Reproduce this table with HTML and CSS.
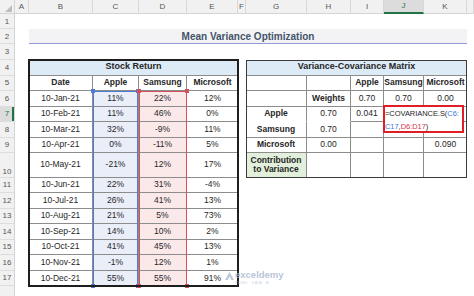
FILE: index.html
```html
<!DOCTYPE html>
<html>
<head>
<meta charset="utf-8">
<link rel="stylesheet" href="styles.css">
</head>
<body>
<div class="sheet">
  <div class="colheads">
    <div class="corner"><span class="tri"></span></div>
    <div class="ch">A</div><div class="ch">B</div><div class="ch">C</div><div class="ch">D</div>
    <div class="ch">E</div><div class="ch">F</div><div class="ch">G</div><div class="ch">H</div>
    <div class="ch">I</div><div class="ch sel">J</div><div class="ch">K</div><div class="ch"></div>
  </div>
  <div class="body">
    <div class="rowheads">
      <div class="rh">1</div><div class="rh">2</div><div class="rh">3</div><div class="rh">4</div>
      <div class="rh">5</div><div class="rh">6</div><div class="rh sel">7</div><div class="rh">8</div>
      <div class="rh">9</div><div class="rh tall">10</div><div class="rh">11</div><div class="rh">12</div>
      <div class="rh">13</div><div class="rh">14</div><div class="rh">15</div><div class="rh">16</div>
      <div class="rh">17</div><div class="rh"></div>
    </div>
    <div class="canvas">
      <div class="title">Mean Variance Optimization</div>

      <div class="stock">
        <div class="layer stock-grid">
          <div class="cell head span4">Stock Return</div>
          <div class="cell bold">Date</div><div class="cell bold">Apple</div><div class="cell bold">Samsung</div><div class="cell bold last">Microsoft</div>
          <div class="cell">10-Jan-21</div><div class="cell blue">11%</div><div class="cell pink">22%</div><div class="cell last">12%</div>
          <div class="cell">10-Feb-21</div><div class="cell blue">11%</div><div class="cell pink">46%</div><div class="cell last">0%</div>
          <div class="cell">10-Mar-21</div><div class="cell blue">32%</div><div class="cell pink">-9%</div><div class="cell last">11%</div>
          <div class="cell">10-Apr-21</div><div class="cell blue">0%</div><div class="cell pink">-11%</div><div class="cell last">5%</div>
          <div class="cell">10-May-21</div><div class="cell blue">-21%</div><div class="cell pink">12%</div><div class="cell last">17%</div>
          <div class="cell">10-Jun-21</div><div class="cell blue">22%</div><div class="cell pink">31%</div><div class="cell last">-4%</div>
          <div class="cell">10-Jul-21</div><div class="cell blue">26%</div><div class="cell pink">41%</div><div class="cell last">13%</div>
          <div class="cell">10-Aug-21</div><div class="cell blue">21%</div><div class="cell pink">5%</div><div class="cell last">73%</div>
          <div class="cell">10-Sep-21</div><div class="cell blue">14%</div><div class="cell pink">10%</div><div class="cell last">2%</div>
          <div class="cell">10-Oct-21</div><div class="cell blue">41%</div><div class="cell pink">45%</div><div class="cell last">13%</div>
          <div class="cell">10-Nov-21</div><div class="cell blue">-1%</div><div class="cell pink">12%</div><div class="cell last">1%</div>
          <div class="cell bottom">10-Dec-21</div><div class="cell blue bottom">55%</div><div class="cell pink bottom">55%</div><div class="cell last bottom">91%</div>
        </div>
        <div class="layer stock-grid overlay">
          <div class="range range-c"><i class="h tl"></i><i class="h tr"></i><i class="h bl"></i><i class="h br"></i></div>
          <div class="range range-d"><i class="h tl"></i><i class="h tr"></i><i class="h bl"></i><i class="h br"></i></div>
        </div>
        <div class="layer frame frame-thick"></div>
      </div>

      <div class="matrix">
        <div class="layer matrix-grid">
          <div class="cell head span5">Variance-Covariance Matrix</div>
          <div class="cell"></div><div class="cell"></div><div class="cell bold">Apple</div><div class="cell bold">Samsung</div><div class="cell bold last">Microsoft</div>
          <div class="cell"></div><div class="cell bold">Weights</div><div class="cell">0.70</div><div class="cell">0.70</div><div class="cell last">0.00</div>
          <div class="cell bold nob">Apple</div><div class="cell nob">0.70</div><div class="cell">0.041</div><div class="cell"></div><div class="cell last"></div>
          <div class="cell bold">Samsung</div><div class="cell">0.70</div><div class="cell"></div><div class="cell"></div><div class="cell last"></div>
          <div class="cell bold">Microsoft</div><div class="cell">0.00</div><div class="cell"></div><div class="cell"></div><div class="cell last">0.090</div>
          <div class="cell bold green bottom">Contribution<br>to Variance</div><div class="cell bottom"></div><div class="cell bottom"></div><div class="cell bottom"></div><div class="cell last bottom"></div>
        </div>
        <div class="layer matrix-grid overlay">
          <div class="editor">=COVARIANCE.S(<span class="ref-c">C6:<br>C17</span>,<span class="ref-d">D6:D17</span>)</div>
        </div>
        <div class="layer frame frame-thin"></div>
      </div>

      <div class="watermark">
        <svg class="wm-icon" width="9" height="10" viewBox="0 0 10 11"><path d="M0 10 L5 1 L10 10 Z M3 10 L5 6 L7 10 Z" fill="#aebbd0" fill-rule="evenodd"/></svg>
        <div class="wm-text">
          <span class="wm-name">exceldemy</span>
          <span class="wm-sub">EXCEL · DATA · BI</span>
        </div>
      </div>
    </div>
  </div>
</div>
</body>
</html>
```
FILE: styles.css
```css
html, body {
  margin: 0;
  padding: 0;
  background: #ffffff;
}
body {
  font-family: "Liberation Sans", Arial, sans-serif;
  font-size: 8.5px;
  color: #262626;
  width: 474px;
  height: 296px;
  overflow: hidden;
}
.sheet {
  display: flex;
  flex-direction: column;
  width: 474px;
  height: 296px;
  overflow: hidden;
}
.colheads {
  display: grid;
  grid-template-columns: 15px 14px 64px 46px 48px 51px 8px 61px 44px 33px 40px 43px 7px;
  height: 14px;
  flex: none;
  background: #f1f1f1;
  border-bottom: 1px solid #d4d4d4;
  box-sizing: border-box;
}
.corner {
  border-right: 1px solid #d4d4d4;
  position: relative;
}
.tri {
  position: absolute;
  right: 2px;
  bottom: 2px;
  width: 0;
  height: 0;
  border-left: 7px solid transparent;
  border-bottom: 7px solid #bdbdbd;
}
.ch {
  border-right: 1px solid #d8d8d8;
  text-align: center;
  font-size: 8px;
  line-height: 13px;
  color: #555;
}
.ch.sel {
  background: #dcdcdc;
  border-bottom: 2px solid #217346;
  color: #217346;
  line-height: 12px;
}
.body {
  display: flex;
  flex: 1;
  min-height: 0;
  overflow: hidden;
}
.rowheads {
  display: flex;
  flex-direction: column;
  width: 15px;
  flex: none;
  background: #f1f1f1;
  border-right: 1px solid #d4d4d4;
  box-sizing: border-box;
}
.rh {
  height: 15.5px;
  flex: none;
  box-sizing: border-box;
  border-bottom: 1px solid #dddddd;
  font-size: 8px;
  color: #555;
  text-align: center;
  display: flex;
  align-items: center;
  justify-content: center;
}
.rh:nth-child(1), .rh:nth-child(2) { height: 15px; }
.rh:nth-child(3) { height: 16px; }
.rh.tall { height: 24.5px; align-items: flex-end; padding-bottom: 1px; }
.rh.sel {
  background: #dcdcdc;
  color: #217346;
  box-shadow: inset -2px 0 0 #217346;
}
.canvas {
  display: grid;
  grid-template-columns: 14px 64px 46px 48px 51px 8px 61px 44px 33px 40px 43px 7px;
  grid-template-rows: 15px 15px 16px repeat(6, 15.5px) 24.5px repeat(7, 15.5px) 1fr;
}
.title {
  grid-column: 2 / 12;
  grid-row: 2;
  background: #f3f3f5;
  border-bottom: 1px solid #8f9bd8;
  color: #44546a;
  font-weight: bold;
  font-size: 10px;
  text-align: center;
  line-height: 15px;
  box-sizing: border-box;
}
.stock, .matrix {
  display: grid;
}
.stock {
  grid-column: 2 / 6;
  grid-row: 4 / 18;
}
.matrix {
  grid-column: 7 / 12;
  grid-row: 4 / 11;
}
.layer {
  grid-area: 1 / 1;
}
.stock-grid {
  display: grid;
  grid-template-columns: 64px 46px 48px 51px;
  grid-template-rows: repeat(6, 15.5px) 24.5px repeat(7, 15.5px);
}
.matrix-grid {
  display: grid;
  grid-template-columns: 61px 44px 33px 40px 43px;
  grid-template-rows: repeat(6, 15.5px) 24.5px;
}
.overlay {
  pointer-events: none;
  z-index: 1;
}
.frame {
  pointer-events: none;
  z-index: 2;
  box-sizing: border-box;
}
.frame-thick {
  border: 2px solid #1e1e1e;
  margin: -1px;
}
.frame-thin {
  border: 1px solid #3a3a3a;
}
.cell {
  border-right: 1px solid #8c8c8c;
  border-bottom: 1px solid #8c8c8c;
  box-sizing: border-box;
  display: flex;
  align-items: center;
  justify-content: center;
  text-align: center;
  white-space: nowrap;
  line-height: 1.1;
}
.cell.last { border-right: none; }
.cell.bottom { border-bottom: none; }
.cell.nob { border-bottom-color: transparent; }
.cell.bold { font-weight: bold; }
.cell.head {
  background: #ddebf7;
  font-weight: bold;
  font-size: 9px;
  border-right: none;
}
.span4 { grid-column: 1 / 5; }
.span5 { grid-column: 1 / 6; }
.blue { background: #e9eef9; }
.pink { background: #fbe9ea; }
.green { background: #e2efda; white-space: normal; }
.range {
  grid-row: 3 / 15;
  position: relative;
  box-sizing: border-box;
}
.range-c {
  grid-column: 2;
  border: 1.5px solid #4f7bd5;
  margin: 0 1px 0 0;
}
.range-d {
  grid-column: 3;
  border: 1.5px solid #d4505a;
}
.h {
  position: absolute;
  width: 4px;
  height: 4px;
}
.range-c .h { background: #4f7bd5; }
.range-d .h { background: #d4505a; }
.h.tl { left: -3px; top: -3px; }
.h.tr { right: -3px; top: -3px; }
.h.bl { left: -3px; bottom: -3px; }
.h.br { right: -3px; bottom: -3px; }
.editor {
  grid-column: 4 / 6;
  grid-row: 4 / 6;
  margin: -2px 3px 5px -1px;
  background: #ffffff;
  border: 2px solid #e01e26;
  font-size: 7.5px;
  letter-spacing: -0.05px;
  line-height: 13px;
  padding: 0;
  white-space: nowrap;
  overflow: hidden;
}
.ref-c { color: #3d78d8; }
.ref-d { color: #d5374a; }
.watermark {
  grid-column: 5 / 8;
  grid-row: 17 / 19;
  align-self: start;
  margin: -1px 0 0 38px;
  display: flex;
  align-items: flex-start;
  gap: 1px;
  opacity: 0.8;
  z-index: 3;
}
.wm-icon { margin-top: 1px; }
.wm-text {
  display: flex;
  flex-direction: column;
}
.wm-name {
  font-weight: bold;
  font-size: 9.5px;
  line-height: 10px;
  color: #a9b8cf;
}
.wm-sub {
  font-size: 3.5px;
  line-height: 4px;
  color: #b9c4d6;
  letter-spacing: 0.3px;
  margin-top: 1px;
}
```
